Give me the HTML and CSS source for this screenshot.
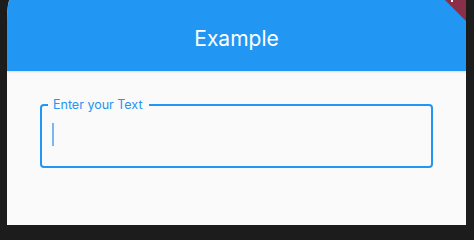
FILE: index.html
```html
<!DOCTYPE html>
<html lang="en">
<head>
<meta charset="utf-8">
<title>Example</title>
<link rel="stylesheet" href="styles.css">
</head>
<body>
<div class="device">
  <div class="screen">
    <header class="app-bar">
      <h1 class="title">Example</h1>
    </header>
    <main class="content">
      <fieldset class="field">
        <legend class="field-label">Enter your Text</legend>
        <div class="cursor"></div>
      </fieldset>
    </main>
    <svg class="debug-banner" width="21" height="21" viewBox="0 0 21 21" aria-hidden="true">
      <polygon points="0,0 21,0 21,21" fill="#8b2f48"/>
      <rect x="6" y="0" width="2" height="2" fill="#ffffff"/>
    </svg>
  </div>
</div>
</body>
</html>
```

FILE: styles.css
```css
* { box-sizing: border-box; }

html, body {
  margin: 0;
  padding: 0;
}

body {
  background: #1c1c1c;
  font-family: Inter, "Noto Sans", sans-serif;
}

.device {
  display: flex;
  height: 225px;
  padding: 0 8px 0 7px;
}

.screen {
  position: relative;
  flex: 1;
  display: flex;
  flex-direction: column;
  background: #fafafa;
  border-top-left-radius: 3px 20px;
  border-top-right-radius: 3px 20px;
}

.app-bar {
  height: 71px;
  padding-top: 26px;
  background: #2196f3;
  border-top-left-radius: 3px 20px;
  border-top-right-radius: 3px 20px;
  box-shadow: 0 1px 2px rgba(0, 0, 0, 0.12);
}

.title {
  margin: 0;
  font-size: 21px;
  line-height: 25px;
  font-weight: 400;
  color: #ffffff;
  text-align: center;
}

.content {
  flex: 1;
  padding: 27px 33px 0 33px;
}

.field {
  margin: 0;
  height: 70px;
  padding: 0 6px 18px 6px;
  border: 2px solid #2196f3;
  border-radius: 4px;
  min-width: 0;
}

.field-label {
  padding: 0 6px 0 5px;
  font-size: 12.5px;
  line-height: 14px;
  color: #2196f3;
}

.cursor {
  width: 2px;
  height: 23px;
  margin: 11px 0 0 4px;
  background: #79b7ef;
}

.debug-banner {
  position: absolute;
  top: 0;
  right: 0;
}
```
